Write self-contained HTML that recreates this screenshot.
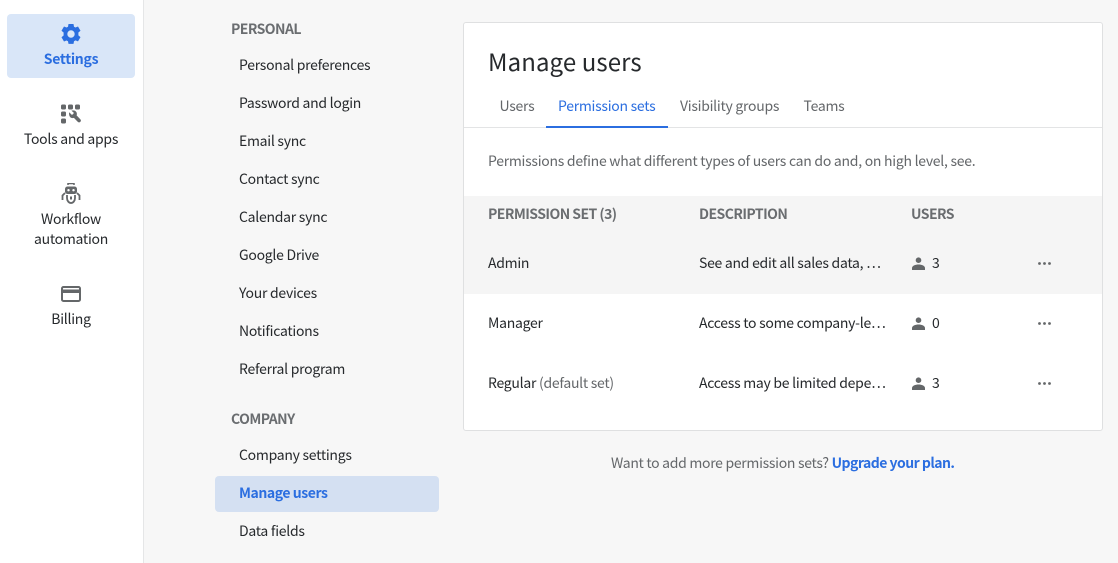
<!DOCTYPE html>
<html><head><meta charset="utf-8"><style>
*{box-sizing:border-box}
html,body{margin:0;padding:0}
body{width:1118px;height:563px;overflow:hidden;position:relative;background:#f7f7f7;font-family:"Noto Sans CJK JP","Liberation Sans",sans-serif;font-size:14px;letter-spacing:-.27px;color:#26292c}
.t{position:absolute;line-height:20px;white-space:nowrap}
.c{text-align:center}
.h{font-weight:700;color:#6a6d70;letter-spacing:-.55px}
svg{position:absolute;display:block}
.g{color:#64676a}
</style></head><body>
<div style="position:absolute;left:0;top:0;width:144px;height:563px;background:#fff;border-right:1px solid #e5e6e7"></div>
<div style="position:absolute;left:7px;top:14px;width:128px;height:64px;background:#d9e6f8;border-radius:4px"></div>
<svg style="left:61px;top:24px" width="20" height="20" viewBox="0 0 20 20"><path fill="#2b6ee0" fill-rule="evenodd" d="M7.500 0h5l.5 2.700 1.500.8 2.500-1 2.500 4.300-2.100 1.700v2.900l2.100 1.700-2.500 4.300-2.500-1-1.500.8-.5 2.700h-5L7 17.300l-1.500-.8-2.500 1L.5 13.200l2.100-1.700V8.500L.5 6.800 3 2.500l2.500 1 1.500-.8zM10 6.300a3.700 3.700 0 1 0 0 7.400 3.700 3.700 0 0 0 0-7.400z"/></svg>
<div class="t c" style="left:7px;top:49px;width:128px;font-weight:700;color:#2b6ee0">Settings</div>
<svg style="left:61px;top:104px" width="20" height="20" viewBox="0 0 20 20" fill="#646769"><rect x="0" y=".5" width="5" height="5" rx="1.500"/><rect x="7" y=".5" width="5" height="5" rx="1.500"/><rect x="14" y=".5" width="5" height="5" rx="1.500"/><rect x="0" y="7.500" width="5" height="5" rx="1.500"/><rect x="0" y="14.500" width="5" height="5" rx="1.500"/><path d="M8.200 8.200l2.800 2.800 2-2-2.600-2.400c2-.6 4-.2 5 1.500.6 1.100.6 2.300.2 3.300l3.700 3.800c.8.800.8 1.800.1 2.600-.7.800-1.900.8-2.700 0l-3.800-3.900c-1.300.4-2.700.2-3.700-.8-1-1.100-1.400-3.100-1-4.900z"/></svg>
<div class="t c" style="left:0;top:129px;width:142px">Tools and apps</div>
<svg style="left:61px;top:183px" width="20" height="22" viewBox="0 0 20 22" fill="none" stroke="#646769" stroke-width="1.800"><path d="M6 12v3c0 3 2 5 4 5s4-2 4-5v-3"/><rect x="4" y="3.500" width="12" height="7.500" rx="2.500" fill="#646769" stroke="none"/><circle cx="7.500" cy="7.200" r="1.200" fill="#fff" stroke="none"/><circle cx="12.500" cy="7.200" r="1.200" fill="#fff" stroke="none"/><path d="M7 2V.5h6V2" stroke-width="1.500"/><path d="M4 10L1.500 12.500V17M16 10l2.500 2.500V17"/><rect x="9" y="13.500" width="2" height="3" fill="#646769" stroke="none"/></svg>
<div class="t c" style="left:0;top:209px;width:142px">Workflow</div>
<div class="t c" style="left:0;top:229px;width:142px">automation</div>
<svg style="left:61px;top:286px" width="20" height="16" viewBox="0 0 20 16"><rect x="1" y="1" width="18" height="14" rx="1.500" fill="none" stroke="#646769" stroke-width="2"/><rect x="1" y="3.500" width="18" height="3.500" fill="#646769"/></svg>
<div class="t c" style="left:0;top:309px;width:142px">Billing</div>

<div class="t h" style="left:231px;top:19px">PERSONAL</div>
<div class="t" style="left:239px;top:55px">Personal preferences</div>
<div class="t" style="left:239px;top:93px">Password and login</div>
<div class="t" style="left:239px;top:131px">Email sync</div>
<div class="t" style="left:239px;top:169px">Contact sync</div>
<div class="t" style="left:239px;top:207px">Calendar sync</div>
<div class="t" style="left:239px;top:245px">Google Drive</div>
<div class="t" style="left:239px;top:283px">Your devices</div>
<div class="t" style="left:239px;top:321px">Notifications</div>
<div class="t" style="left:239px;top:359px">Referral program</div>
<div class="t h" style="left:231px;top:409px">COMPANY</div>
<div class="t" style="left:239px;top:445px">Company settings</div>
<div style="position:absolute;left:215px;top:476px;width:224px;height:36px;background:#d4e0f2;border-radius:4px"></div>
<div class="t" style="left:239px;top:483px;font-weight:700;color:#2b6ee0;letter-spacing:-.44px">Manage users</div>
<div class="t" style="left:239px;top:521px">Data fields</div>

<div style="position:absolute;left:463px;top:22px;width:640px;height:409px;background:#fff;border:1px solid #dfe0e1;border-radius:3px"></div>
<div class="t" style="left:488px;top:45px;font-size:24px;line-height:32px;letter-spacing:.1px">Manage users</div>
<div class="t g" style="left:499.500px;top:96px">Users</div>
<div class="t" style="left:558px;top:96px;color:#2b6ee0">Permission sets</div>
<div class="t g" style="left:680px;top:96px">Visibility groups</div>
<div class="t g" style="left:803.500px;top:96px">Teams</div>
<div style="position:absolute;left:464px;top:127px;width:638px;height:1px;background:#e3e4e5"></div>
<div style="position:absolute;left:546px;top:126px;width:122px;height:2px;background:#2b6ee0"></div>
<div class="t g" style="left:488px;top:151px">Permissions define what different types of users can do and, on high level, see.</div>

<div style="position:absolute;left:464px;top:196px;width:638px;height:98px;background:#f5f5f5"></div>
<div class="t h" style="left:488px;top:204px">PERMISSION SET (3)</div>
<div class="t h" style="left:699px;top:204px">DESCRIPTION</div>
<div class="t h" style="left:911px;top:204px">USERS</div>

<div class="t" style="left:488px;top:253px">Admin</div>
<div class="t" style="left:699px;top:253px">See and edit all sales data, …</div>
<div class="t" style="left:932px;top:253px">3</div>
<div class="t" style="left:488px;top:313px">Manager</div>
<div class="t" style="left:699px;top:313px">Access to some company-le…</div>
<div class="t" style="left:932px;top:313px">0</div>
<div class="t" style="left:488px;top:373px">Regular <span class="g">(default set)</span></div>
<div class="t" style="left:699px;top:373px">Access may be limited depe…</div>
<div class="t" style="left:932px;top:373px">3</div>

<svg style="left:912px;top:257px" width="13" height="13" viewBox="0 0 13 13" fill="#646769"><circle cx="6.500" cy="3.200" r="2.800"/><path d="M0 13v-2c0-2.200 3.500-3.500 6.500-3.500S13 8.800 13 11v2z"/></svg>
<svg style="left:912px;top:317px" width="13" height="13" viewBox="0 0 13 13" fill="#646769"><circle cx="6.500" cy="3.200" r="2.800"/><path d="M0 13v-2c0-2.200 3.500-3.500 6.500-3.500S13 8.800 13 11v2z"/></svg>
<svg style="left:912px;top:377px" width="13" height="13" viewBox="0 0 13 13" fill="#646769"><circle cx="6.500" cy="3.200" r="2.800"/><path d="M0 13v-2c0-2.200 3.500-3.500 6.500-3.500S13 8.800 13 11v2z"/></svg>
<svg style="left:1038px;top:262px" width="13" height="3" viewBox="0 0 13 3" fill="#646769"><circle cx="1.500" cy="1.500" r="1.400"/><circle cx="6.500" cy="1.500" r="1.400"/><circle cx="11.500" cy="1.500" r="1.400"/></svg>
<svg style="left:1038px;top:322px" width="13" height="3" viewBox="0 0 13 3" fill="#646769"><circle cx="1.500" cy="1.500" r="1.400"/><circle cx="6.500" cy="1.500" r="1.400"/><circle cx="11.500" cy="1.500" r="1.400"/></svg>
<svg style="left:1038px;top:382px" width="13" height="3" viewBox="0 0 13 3" fill="#646769"><circle cx="1.500" cy="1.500" r="1.400"/><circle cx="6.500" cy="1.500" r="1.400"/><circle cx="11.500" cy="1.500" r="1.400"/></svg>

<div class="t g" style="left:611px;top:453px;letter-spacing:-.3px">Want to add more permission sets? <span style="font-weight:700;color:#2b6ee0;letter-spacing:-.52px">Upgrade your plan.</span></div>
</body></html>
